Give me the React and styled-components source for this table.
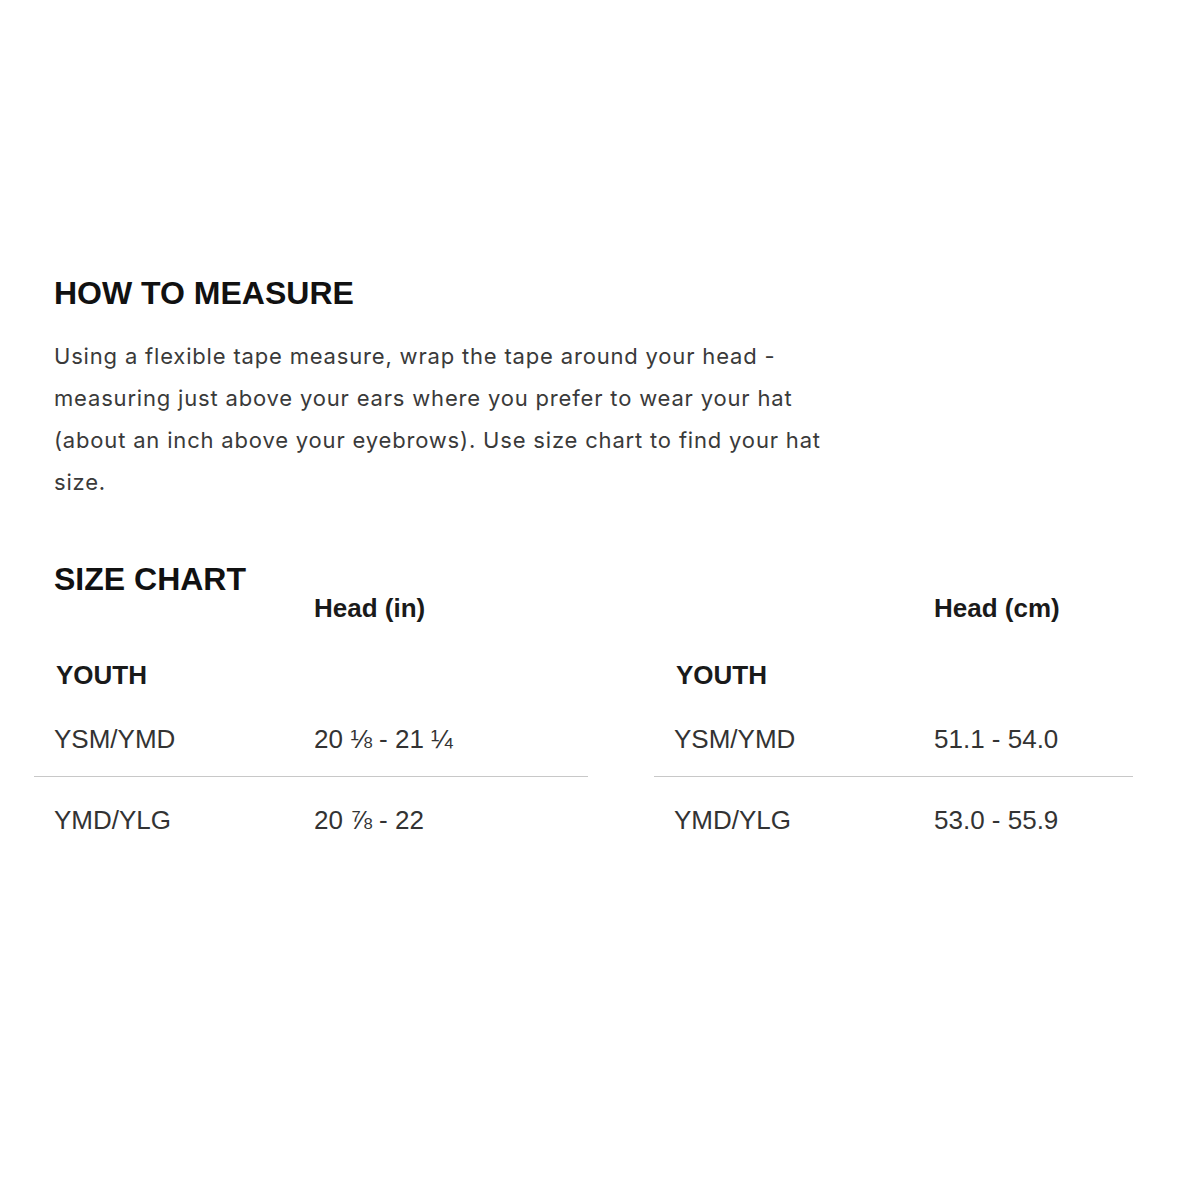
import React from 'react';
import styled, { createGlobalStyle } from 'styled-components';

const GlobalStyle = createGlobalStyle`
    html, body {
        margin: 0;
        padding: 0;
        background: #ffffff;
    }
    body {
        font-family: "Liberation Sans", Arial, sans-serif;
        color: #333333;
    }
`;

const Page = styled.div`
    width: 1200px;
    min-height: 1200px;
    box-sizing: border-box;
    padding: 273px 0 0 34px;
`;

const Section = styled.section`
    padding-left: 20px;
`;

const Title = styled.h2`
    margin: 0;
    font-size: 32px;
    line-height: 40px;
    font-weight: 700;
    color: #111111;
`;

const Desc = styled.p`
    margin: 22px 0 0;
    max-width: 800px;
    font-family: Inter, "Liberation Sans", sans-serif;
    font-size: 22px;
    letter-spacing: 0.82px;
    line-height: 42px;
    color: #3a3a3a;
`;

const Tables = styled.div`
    display: flex;
    gap: 66px;
    margin-top: 56px;
`;

const Table = styled.div`
    width: ${props => props.width}px;
    display: grid;
    grid-template-columns: 280px 1fr;
`;

const Row = styled.div`
    display: contents;
`;

const HeadCell = styled.div`
    padding-left: ${props => props.first ? '20px' : '0'};
    padding-top: ${props => props.first ? '0' : '33px'};
    font-size: 26px;
    line-height: 32px;
    font-weight: 700;
    color: #1a1a1a;
`;

const ChartTitle = styled(Title)`
    padding-left: 20px;
`;

const GroupCell = styled.div`
    padding: 35px 0 5px ${props => props.first ? '22px' : '0'};
    font-size: 26px;
    line-height: 32px;
    font-weight: 700;
    color: #1a1a1a;
`;

const Cell = styled.div`
    padding: 27px 0 21px ${props => props.first ? '20px' : '0'};
    font-size: 26px;
    line-height: 32px;
    color: #333333;
    border-bottom: ${props => props.divider ? '1px solid #c8c8c8' : '1px solid transparent'};
`;

const charts = [
    {
        width: 554,
        title: 'SIZE CHART',
        head: 'Head (in)',
        rows: [
            ['YSM/YMD', '20 \u215B - 21 \u00BC'],
            ['YMD/YLG', '20 \u215E - 22'],
        ],
    },
    {
        width: 479,
        title: '',
        head: 'Head (cm)',
        rows: [
            ['YSM/YMD', '51.1 - 54.0'],
            ['YMD/YLG', '53.0 - 55.9'],
        ],
    },
];

const SizeTable = ({ chart }) => (
    <Table width={chart.width}>
        <Row>
            {chart.title ? <ChartTitle>{chart.title}</ChartTitle> : <HeadCell first />}
            <HeadCell>{chart.head}</HeadCell>
        </Row>
        <Row>
            <GroupCell first>YOUTH</GroupCell>
            <GroupCell />
        </Row>
        {chart.rows.map((r, i) => (
            <Row key={r[0]}>
                <Cell first divider={i < chart.rows.length - 1}>{r[0]}</Cell>
                <Cell divider={i < chart.rows.length - 1}>{r[1]}</Cell>
            </Row>
        ))}
    </Table>
);

const App = () => {
    return (
        <Page>
            <GlobalStyle />
            <Section>
                <Title>HOW TO MEASURE</Title>
                <Desc>
                    Using a flexible tape measure, wrap the tape around your head - measuring just above your ears where you prefer to wear your hat (about an inch above your eyebrows). Use size chart to find your hat size.
                </Desc>
            </Section>
            <Tables>
                {charts.map(c => <SizeTable key={c.head} chart={c} />)}
            </Tables>
        </Page>
    );
};

export default App;
